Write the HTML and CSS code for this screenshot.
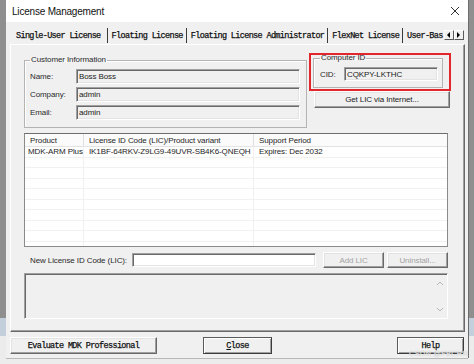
FILE: index.html
```html
<!DOCTYPE html>
<html>
  <head>
    <link rel="stylesheet" href="styles.css">
  </head>
  <body>
    <div class="window">
      <header class="titlebar">
        <span class="title">License Management</span>
        <svg class="close" width="10" height="10" viewBox="0 0 10 10"><path d="M1 1 L9 9 M9 1 L1 9" stroke="#333" stroke-width="1" fill="none"/></svg>
      </header>

      <div class="body">
        <!-- tab strip -->
        <nav class="tabs">
          <span class="tab active">Single-User License</span>
          <span class="tab">Floating License</span>
          <span class="tab">Floating License Administrator</span>
          <span class="tab">FlexNet License</span>
          <span class="tab cut">User-Bas</span>
          <span class="spin"><i class="arr left"></i><i class="arr right"></i></span>
        </nav>

        <section class="panel">
          <div class="upper">
            <fieldset class="group customer">
              <legend>Customer Information</legend>
              <div class="field"><label>Name:</label><div class="edit">Boss Boss</div></div>
              <div class="field"><label>Company:</label><div class="edit">admin</div></div>
              <div class="field"><label>Email:</label><div class="edit">admin</div></div>
            </fieldset>

            <div class="side">
              <div class="mark">
                <fieldset class="group cid">
                  <legend>Computer ID</legend>
                  <div class="field"><label>CID:</label><div class="edit">CQKPY-LKTHC</div></div>
                </fieldset>
              </div>
              <div class="btn wide">Get LIC via Internet...</div>
            </div>
          </div>

          <!-- installed licenses -->
          <div class="list">
            <div class="head">
              <span class="c1">Product</span>
              <span class="c2">License ID Code (LIC)/Product variant</span>
              <span class="c3">Support Period</span>
            </div>
            <div class="row">
              <span class="c1">MDK-ARM Plus</span>
              <span class="c2">IK1BF-64RKV-Z9LG9-49UVR-SB4K6-QNEQH</span>
              <span class="c3">Expires: Dec 2032</span>
            </div>
            <div class="row"><span class="c1"></span><span class="c2"></span><span class="c3"></span></div>
            <div class="row"><span class="c1"></span><span class="c2"></span><span class="c3"></span></div>
            <div class="row"><span class="c1"></span><span class="c2"></span><span class="c3"></span></div>
            <div class="row"><span class="c1"></span><span class="c2"></span><span class="c3"></span></div>
            <div class="row"><span class="c1"></span><span class="c2"></span><span class="c3"></span></div>
            <div class="row"><span class="c1"></span><span class="c2"></span><span class="c3"></span></div>
            <div class="row"><span class="c1"></span><span class="c2"></span><span class="c3"></span></div>
            <div class="row"><span class="c1"></span><span class="c2"></span><span class="c3"></span></div>
            <div class="row"><span class="c1"></span><span class="c2"></span><span class="c3"></span></div>
          </div>

          <div class="newlic">
            <label>New License ID Code (LIC):</label>
            <div class="edit white"></div>
            <div class="btn small off">Add LIC</div>
            <div class="btn small off">Uninstall...</div>
          </div>

          <div class="msg">
            <div class="scroll">
              <svg width="8" height="5" viewBox="0 0 8 5"><polyline points="1,4 4,1 7,4" fill="none" stroke="#b5b5b5" stroke-width="1"/></svg>
              <svg width="8" height="5" viewBox="0 0 8 5"><polyline points="1,1 4,4 7,1" fill="none" stroke="#b5b5b5" stroke-width="1"/></svg>
            </div>
          </div>
        </section>

        <footer class="actions">
          <div class="btn mono eval">Evaluate MDK Professional</div>
          <div class="btn mono def close-btn"><u>C</u>lose</div>
          <div class="btn mono def help">Help</div>
        </footer>
      </div>
      <span class="watermark">CSDN @FBCRH</span>
    </div>
  </body>
</html>
```

FILE: styles.css
```css
* { margin: 0; padding: 0; box-sizing: border-box; }

body {
  width: 474px;
  height: 364px;
  overflow: hidden;
  font-family: "Liberation Sans", Arial, sans-serif;
  font-size: 8px;
  letter-spacing: -0.1px;
  color: #1e1e1e;
  background: linear-gradient(#8f8f8f 0 318px, #c3cfdb 318px 336px, #ececec 336px);
}

/* dialog shell */
.window {
  position: relative;
  margin-left: 6px;
  width: 462px;
  height: 358px;
  background: #f0f0f0;
  display: flex;
  flex-direction: column;
  box-shadow: 1px 0 0 #6c6c6c, 0 1px 0 #b8b8b8;
}

.titlebar {
  height: 22px;
  flex-shrink: 0;
  background: #fff;
  display: flex;
  align-items: center;
  justify-content: space-between;
  padding: 0 8px 0 6px;
}
.title { font-size: 10px; letter-spacing: -0.2px; color: #111; }

.body { flex: 1; padding: 0 3px 0 4px; display: flex; flex-direction: column; }

/* tabs */
.tabs {
  height: 22px;
  display: flex;
  align-items: flex-end;
  padding: 0 0 1px 2px;
  font-family: "Liberation Mono", monospace;
  font-size: 8.5px;
  letter-spacing: -0.65px;
  color: #111;
  -webkit-text-stroke: 0.25px #111;
}
.tab {
  height: 15px;
  display: flex;
  align-items: center;
  padding: 0 3px 0 4px;
  border-right: 1px solid #3a3a3a;
  white-space: nowrap;
}
.tab.active { padding-right: 6px; }
.tab.cut { border-right: none; padding-right: 1px; }
.spin { display: flex; margin-bottom: 3px; }
.arr {
  width: 10px;
  height: 10px;
  display: flex;
  align-items: center;
  justify-content: center;
  background: #f0f0f0;
  border: 1px solid;
  border-color: #fff #5a5a5a #5a5a5a #fff;
}
.arr:before { content: ''; border: 3px solid transparent; }
.arr.left:before { border-right-color: #000; margin-left: -3px; }
.arr.right:before { border-left-color: #000; margin-right: -3px; }

/* tab page */
.panel {
  height: 288px;
  flex-shrink: 0;
  border: 1px solid;
  border-color: #fff #696969 #696969 #fff;
  box-shadow: inset -1px -1px 0 #a0a0a0;
  padding: 8px 15px 0 13px;
  display: flex;
  flex-direction: column;
}

.upper { display: flex; gap: 2px; align-items: flex-start; }

.group {
  border: 1px solid #b4b4b4;
  box-shadow: inset 1px 1px 0 #fff;
}
.group legend { line-height: 10px; padding: 0 1px; color: #2a2a2a; }

.customer {
  flex-shrink: 0;
  width: 283px;
  height: 73px;
  margin-top: 2px;
  padding: 4px 6px 0 5px;
  display: flex;
  flex-direction: column;
  gap: 3px;
}

.field { display: flex; align-items: center; }
.field label { width: 46px; color: #2a2a2a; }
.customer .edit { width: 224px; }

.edit {
  height: 15px;
  display: flex;
  align-items: center;
  padding-left: 2px;
  background: #f0f0f0;
  border: 1px solid;
  border-color: #a0a0a0 #fff #fff #a0a0a0;
  box-shadow: inset 1px 1px 0 #696969, inset -1px -1px 0 #e3e3e3;
  color: #222;
}
.edit.white { background: #fff; }

.side { flex-shrink: 0; width: 142px; display: flex; flex-direction: column; }
.mark { border: 2px solid #e3262b; padding: 0 8px 1px 2px; }
.cid { margin-top: -2px; padding: 4px 4px 6px 6px; }
.cid .field label { width: 24px; }
.cid .edit { width: 94px; height: 14px; }

.btn {
  display: flex;
  align-items: center;
  justify-content: center;
  background: #f0f0f0;
  border: 1px solid;
  border-color: #fff #696969 #696969 #fff;
  box-shadow: inset -1px -1px 0 #a0a0a0, inset 1px 1px 0 #e3e3e3;
  color: #222;
  white-space: nowrap;
}
.btn.wide { width: 136px; height: 17px; margin-left: 5px; }
.btn.small { width: 61px; height: 16px; }
.btn.off { color: #a3a3a3; }

/* license list */
.list {
  margin-top: 5px;
  width: 424px;
  height: 114px;
  flex-shrink: 0;
  overflow: hidden;
  background: #fff;
  border: 1px solid #8a8a8a;
  border-top-color: #6e6e6e;
}
.head, .row { display: flex; }
.head { height: 13px; align-items: center; background: #fbfbfb; border-bottom: 1px solid #e3e3e3; }
.head span { height: 100%; display: flex; align-items: center; padding-left: 5px; border-right: 1px solid #e0e0e0; }
.row { height: 10.5px; border-bottom: 1px solid #f1f1f1; }
.row span { display: flex; align-items: center; padding-left: 5px; border-right: 1px solid #f0f0f0; white-space: nowrap; overflow: hidden; }
.row .c1 { padding-left: 3px; }
.c1 { width: 59px; }
.c2 { width: 170px; }
.c3 { flex: 1; border-right: none !important; }

.newlic { margin-top: 5px; height: 16px; display: flex; align-items: center; }
.newlic label { width: 108px; padding-left: 6px; color: #2a2a2a; }
.newlic .edit { width: 184px; height: 14px; margin-right: 7px; }
.newlic .btn + .btn { margin-left: 3px; }

.msg {
  margin-top: 5px;
  width: 424px;
  height: 46px;
  display: flex;
  justify-content: flex-end;
  border: 1px solid;
  border-color: #a0a0a0 #fff #fff #a0a0a0;
  box-shadow: inset 1px 1px 0 #696969;
}
.scroll {
  width: 14px;
  display: flex;
  flex-direction: column;
  align-items: center;
  justify-content: space-between;
  padding: 7px 0 6px;
}

/* bottom buttons */
.actions { margin-top: 5px; display: flex; }
.btn.mono {
  height: 17px;
  font-family: "Liberation Mono", monospace;
  font-size: 8.5px;
  letter-spacing: -0.65px;
  color: #111;
  -webkit-text-stroke: 0.25px #111;
}
.eval { width: 147px; }
.close-btn { width: 69px; margin-left: 46px; }
.help { width: 67px; margin-left: 125px; }
.btn.def { border-color: #5a5a5a #3c3c3c #3c3c3c #5a5a5a; box-shadow: inset 1px 1px 0 #fff, inset -1px -1px 0 #a0a0a0; }

.watermark {
  position: absolute;
  right: 0;
  bottom: 0;
  font-size: 7.5px;
  color: rgba(255, 255, 255, 0.85);
  text-shadow: 0 0 1px #9a9a9a;
  letter-spacing: 0.2px;
}
```
